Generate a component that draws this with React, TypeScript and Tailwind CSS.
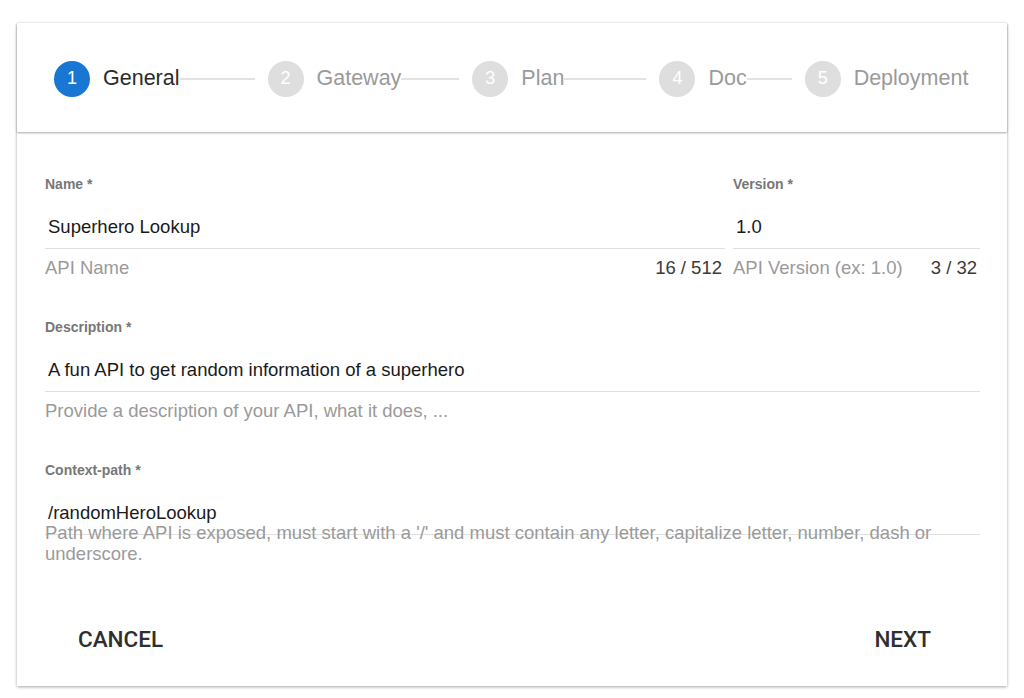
const steps = [
  { n: 1, label: "General", active: true, line: 75 },
  { n: 2, label: "Gateway", active: false, line: 58 },
  { n: 3, label: "Plan", active: false, line: 82 },
  { n: 4, label: "Doc", active: false, line: 45 },
  { n: 5, label: "Deployment", active: false, line: 0 },
];

function Step({ n, label, active, line }: { n: number; label: string; active: boolean; line: number }) {
  return (
    <div className="flex items-center">
      <div
        className={
          "w-[36px] h-[36px] rounded-full flex items-center justify-center text-white text-[18px] " +
          (active ? "bg-[#1976d2]" : "bg-[#dedede]")
        }
      >
        {n}
      </div>
      <span className={"ml-[13px] text-[21.5px] " + (active ? "text-[#2b2b2b]" : "text-[#9a9a9a]")}>{label}</span>
      {line > 0 && <div className="h-[2px] bg-[#e2e2e2] mr-[13px]" style={{ width: line }} />}
    </div>
  );
}

function Field({
  label,
  value,
  helper,
  counter,
  className = "",
}: {
  label: string;
  value: string;
  helper: string;
  counter?: string;
  className?: string;
}) {
  return (
    <div className={"flex flex-col " + className}>
      <label className="text-[14px] leading-4 font-bold text-[#777]">{label}</label>
      <div className="mt-[14px] h-[43px] flex items-center border-b border-[#e0e0e0] pl-[3px] text-[18.5px] text-[#1a1a1a]">
        {value}
      </div>
      <div className="mt-2 flex justify-between text-[18.5px] leading-[21px]">
        <span className="text-[#9a9a9a]">{helper}</span>
        {counter && <span className="text-[#3a3a3a] pr-[3px]">{counter}</span>}
      </div>
    </div>
  );
}

export default function App() {
  return (
    <div className="min-h-screen bg-white pt-[23px] px-[17px] font-['Liberation_Sans',Arial,sans-serif]">
      <div className="bg-white shadow-[0_1px_3px_rgba(0,0,0,0.35)]">
        <div className="relative z-10 h-[109px] flex items-center pl-[37px] pt-[2px] shadow-[0_1px_2px_rgba(0,0,0,0.35)]">
          {steps.map((s) => (
            <Step key={s.n} {...s} />
          ))}
        </div>

        <div className="pt-[44px] pl-[28px] pr-[27px]">
          <div className="flex gap-2">
            <Field
              className="flex-1"
              label="Name *"
              value="Superhero Lookup"
              helper="API Name"
              counter="16 / 512"
            />
            <Field
              className="w-[247px]"
              label="Version *"
              value="1.0"
              helper="API Version (ex: 1.0)"
              counter="3 / 32"
            />
          </div>

          <Field
            className="mt-[41px]"
            label="Description *"
            value="A fun API to get random information of a superhero"
            helper="Provide a description of your API, what it does, ..."
          />

          <div className="mt-[41px] flex flex-col">
            <label className="text-[14px] leading-4 font-bold text-[#777]">Context-path *</label>
            <div className="mt-[14px] h-[43px] flex items-center border-b border-[#e0e0e0] pl-[3px] text-[18.5px] text-[#1a1a1a]">
              /randomHeroLookup
            </div>
            <p className="-mt-[13px] pr-[40px] text-[18.5px] leading-[21px] text-[#9a9a9a]">
              Path where API is exposed, must start with a '/' and must contain any letter, capitalize letter, number,
              dash or underscore.
            </p>
          </div>
        </div>

        <div className="mt-[58px] pb-[28px] pl-[45px] pr-[60px] flex justify-between font-['Roboto',Arial,sans-serif]">
          <button className="h-[36px] px-4 text-[22.5px] font-medium text-[#2f2f2f]">CANCEL</button>
          <button className="h-[36px] px-4 text-[22.5px] font-medium text-[#2f2f2f]">NEXT</button>
        </div>
      </div>
    </div>
  );
}
